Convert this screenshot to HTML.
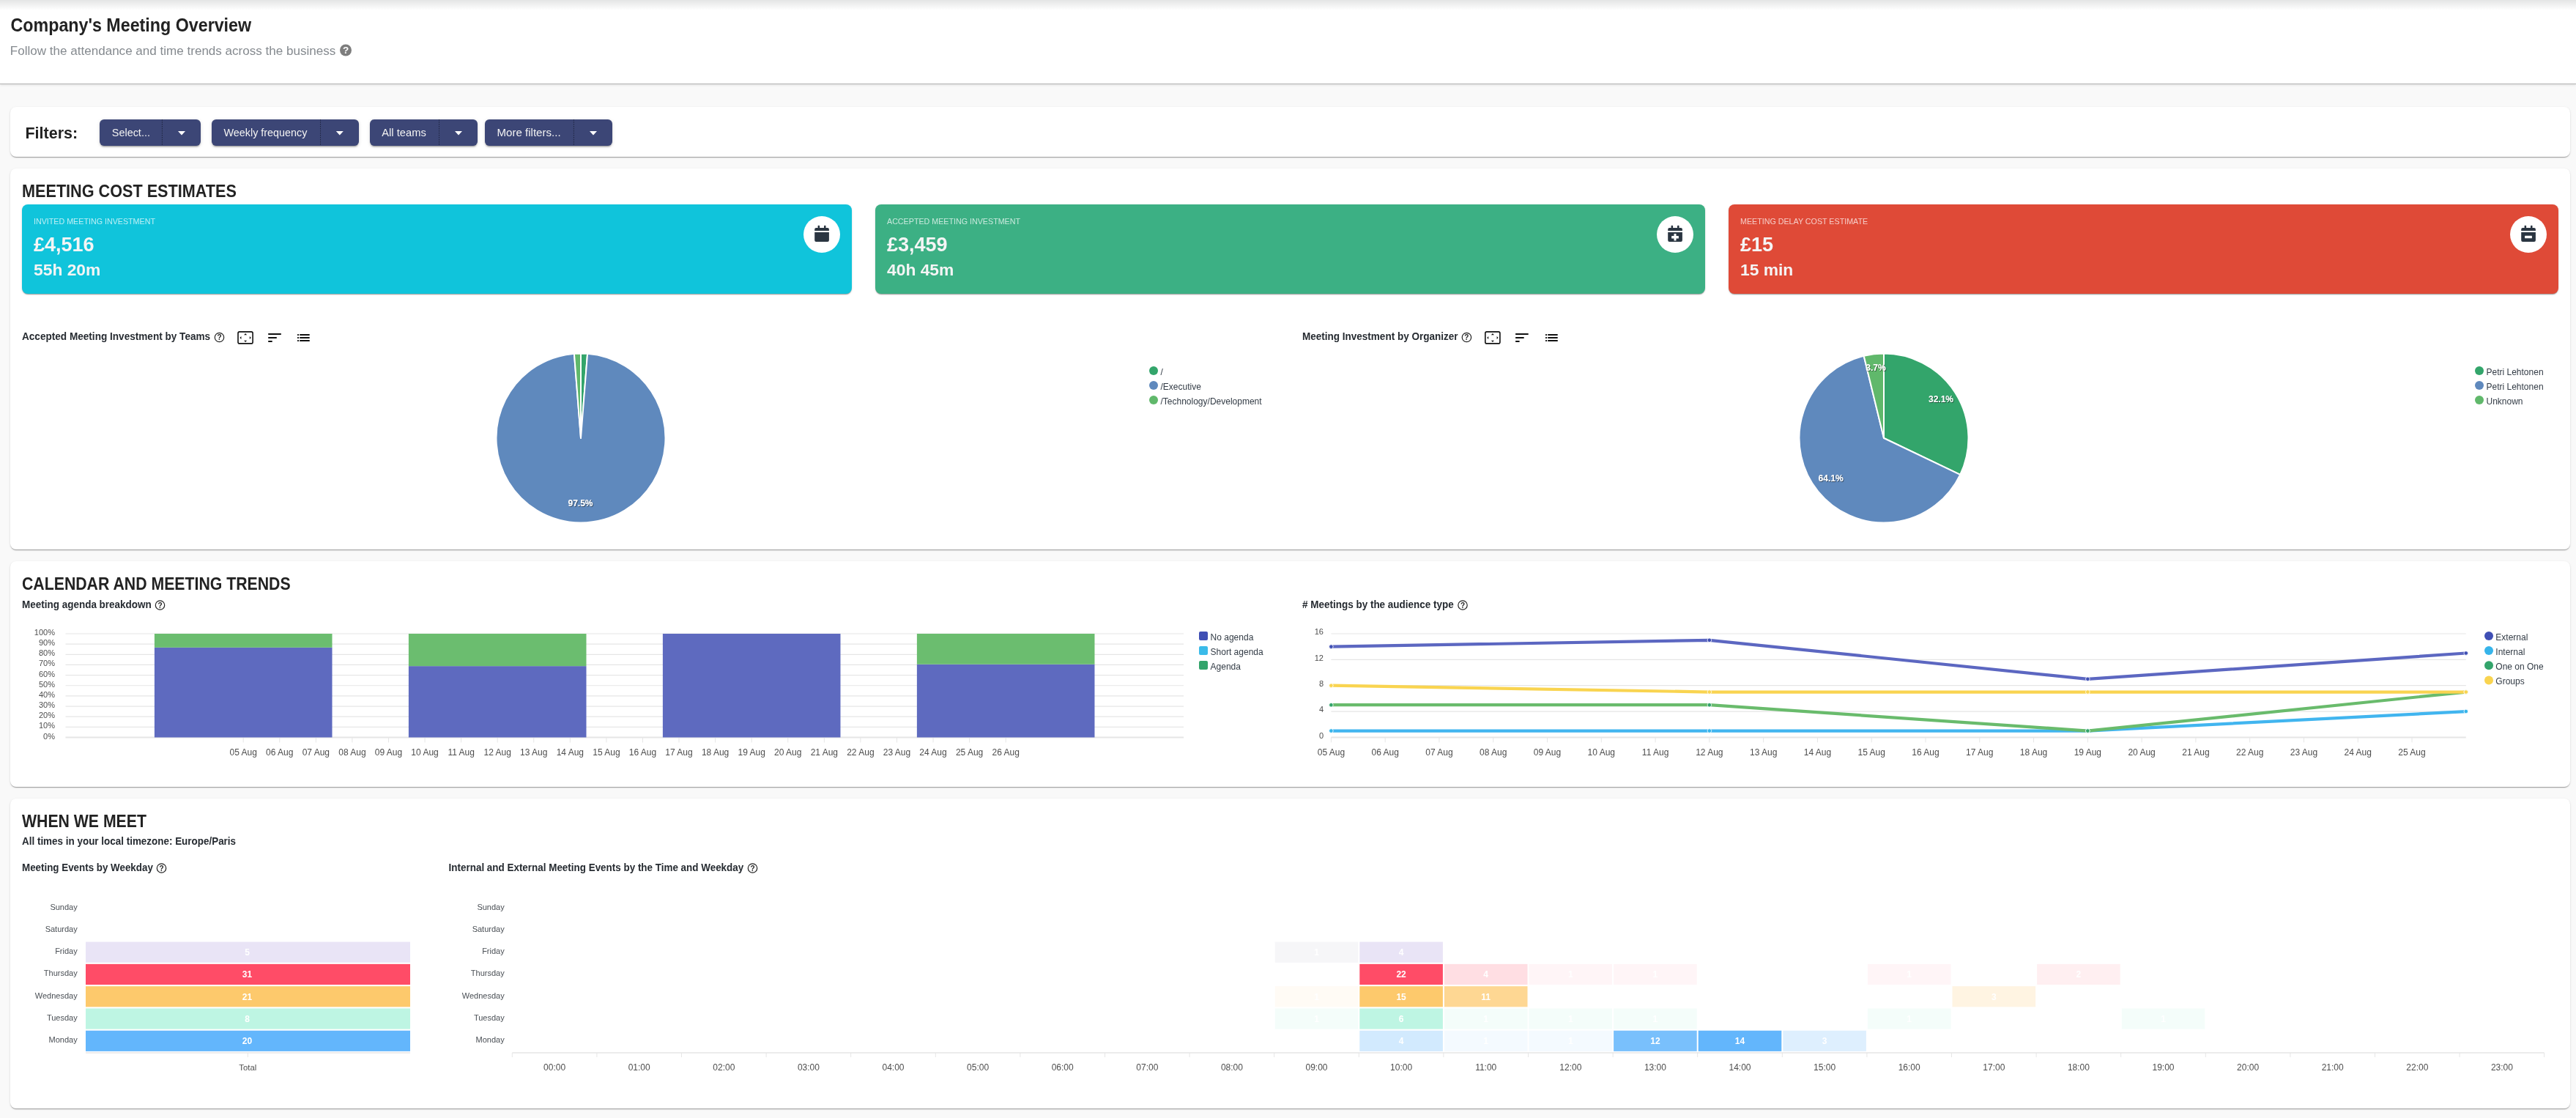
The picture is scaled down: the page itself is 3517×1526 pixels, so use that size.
<!DOCTYPE html>
<html><head><meta charset="utf-8"><style>
html,body{margin:0;padding:0;}
body{width:3517px;height:1526px;position:relative;overflow:hidden;background:#f9f9f9;font-family:"Liberation Sans", sans-serif;}
svg text{font-family:"Liberation Sans", sans-serif;}
</style></head><body>
<div style="position:absolute;left:0;top:0;width:3517px;height:114px;background:linear-gradient(#e4e5e5 0px,#fff 14px);border-bottom:1px solid #b4b4b4;box-shadow:0 1px 3px rgba(0,0,0,.12)"></div><div style="position:absolute;left:14px;top:146px;width:3495px;height:68px;border-radius:8px;background:#fff;box-shadow:0 2px 1px -1px rgba(0,0,0,.2),0 1px 1px 0 rgba(0,0,0,.14),0 1px 3px 0 rgba(0,0,0,.12)"></div><div style="position:absolute;left:136.1px;top:163px;width:137.8px;height:36px;border-radius:6px;background:#3c4676;box-shadow:0 3px 1px -2px rgba(0,0,0,.2),0 2px 2px 0 rgba(0,0,0,.14),0 1px 5px 0 rgba(0,0,0,.12)"></div><div style="position:absolute;left:289.2px;top:163px;width:200.4px;height:36px;border-radius:6px;background:#3c4676;box-shadow:0 3px 1px -2px rgba(0,0,0,.2),0 2px 2px 0 rgba(0,0,0,.14),0 1px 5px 0 rgba(0,0,0,.12)"></div><div style="position:absolute;left:505.4px;top:163px;width:146.5px;height:36px;border-radius:6px;background:#3c4676;box-shadow:0 3px 1px -2px rgba(0,0,0,.2),0 2px 2px 0 rgba(0,0,0,.14),0 1px 5px 0 rgba(0,0,0,.12)"></div><div style="position:absolute;left:662.2px;top:163px;width:173.6px;height:36px;border-radius:6px;background:#3c4676;box-shadow:0 3px 1px -2px rgba(0,0,0,.2),0 2px 2px 0 rgba(0,0,0,.14),0 1px 5px 0 rgba(0,0,0,.12)"></div><div style="position:absolute;left:14px;top:230px;width:3495px;height:520px;border-radius:8px;background:#fff;box-shadow:0 2px 1px -1px rgba(0,0,0,.2),0 1px 1px 0 rgba(0,0,0,.14),0 1px 3px 0 rgba(0,0,0,.12)"></div><div style="position:absolute;left:30px;top:279px;width:1133px;height:122px;border-radius:8px;background:#10c4db;box-shadow:0 2px 1px -1px rgba(0,0,0,.2),0 1px 1px 0 rgba(0,0,0,.14),0 1px 3px 0 rgba(0,0,0,.12)"></div><div style="position:absolute;left:1195px;top:279px;width:1133px;height:122px;border-radius:8px;background:#3cb084;box-shadow:0 2px 1px -1px rgba(0,0,0,.2),0 1px 1px 0 rgba(0,0,0,.14),0 1px 3px 0 rgba(0,0,0,.12)"></div><div style="position:absolute;left:2360px;top:279px;width:1133px;height:122px;border-radius:8px;background:#df4a37;box-shadow:0 2px 1px -1px rgba(0,0,0,.2),0 1px 1px 0 rgba(0,0,0,.14),0 1px 3px 0 rgba(0,0,0,.12)"></div><div style="position:absolute;left:14px;top:766px;width:3495px;height:308px;border-radius:8px;background:#fff;box-shadow:0 2px 1px -1px rgba(0,0,0,.2),0 1px 1px 0 rgba(0,0,0,.14),0 1px 3px 0 rgba(0,0,0,.12)"></div><div style="position:absolute;left:14px;top:1090px;width:3495px;height:423px;border-radius:8px;background:#fff;box-shadow:0 2px 1px -1px rgba(0,0,0,.2),0 1px 1px 0 rgba(0,0,0,.14),0 1px 3px 0 rgba(0,0,0,.12)"></div>
<svg width="3517" height="1526" viewBox="0 0 3517 1526" style="position:absolute;left:0;top:0;will-change:transform">
<defs><filter id="ts" x="-20%" y="-40%" width="140%" height="180%"><feDropShadow dx="0.8" dy="0.8" stdDeviation="0.5" flood-color="#000" flood-opacity="0.6"/></filter></defs>
<text transform="translate(14.50,43.20) scale(0.8950,1)" font-size="26" font-weight="bold" fill="#222" text-anchor="start" >Company's Meeting Overview</text><text transform="translate(13.80,75.00) scale(1.0040,1)" font-size="17" font-weight="normal" fill="#858a8f" text-anchor="start" >Follow the attendance and time trends across the business</text><circle cx="472" cy="68.5" r="8" fill="#7d7d7d"/><text x="472" y="73.1" font-size="13.5" font-weight="bold" fill="#fff" text-anchor="middle">?</text><text transform="translate(34.50,189.00) scale(0.9900,1)" font-size="21.7" font-weight="bold" fill="#222" text-anchor="start" >Filters:</text><text transform="translate(152.80,186.00) scale(1.0084,1)" font-size="14.3" font-weight="normal" fill="#f2f2f2" text-anchor="start" >Select...</text><line x1="221.40" y1="163.00" x2="221.40" y2="199.00" stroke="#1f2540" stroke-width="1" stroke-dasharray="1.5 1.5"/><path d="M243,179 L253,179 L248,184.5 Z" fill="#fff"/><text transform="translate(305.50,186.00) scale(1.0055,1)" font-size="14.3" font-weight="normal" fill="#f2f2f2" text-anchor="start" >Weekly frequency</text><line x1="437.50" y1="163.00" x2="437.50" y2="199.00" stroke="#1f2540" stroke-width="1" stroke-dasharray="1.5 1.5"/><path d="M458.8,179 L468.8,179 L463.8,184.5 Z" fill="#fff"/><text transform="translate(521.30,186.00) scale(1.0280,1)" font-size="14.3" font-weight="normal" fill="#f2f2f2" text-anchor="start" >All teams</text><line x1="599.50" y1="163.00" x2="599.50" y2="199.00" stroke="#1f2540" stroke-width="1" stroke-dasharray="1.5 1.5"/><path d="M621,179 L631,179 L626,184.5 Z" fill="#fff"/><text transform="translate(678.40,186.00) scale(1.0573,1)" font-size="14.3" font-weight="normal" fill="#f2f2f2" text-anchor="start" >More filters...</text><line x1="783.40" y1="163.00" x2="783.40" y2="199.00" stroke="#1f2540" stroke-width="1" stroke-dasharray="1.5 1.5"/><path d="M805,179 L815,179 L810,184.5 Z" fill="#fff"/><text transform="translate(30.00,269.00) scale(0.9212,1)" font-size="23.5" font-weight="bold" fill="#222" text-anchor="start" >MEETING COST ESTIMATES</text><text transform="translate(46.00,306.25) scale(0.9310,1)" font-size="11.5" font-weight="normal" fill="rgba(255,255,255,0.72)" text-anchor="start" >INVITED MEETING INVESTMENT</text><text x="46.00" y="343.00" font-size="27" font-weight="bold" fill="#f5f5f5" text-anchor="start" >£4,516</text><text transform="translate(46.00,376.00) scale(1.0150,1)" font-size="22.5" font-weight="bold" fill="#f5f5f5" text-anchor="start" >55h 20m</text><circle cx="1122" cy="320" r="25" fill="#fff"/><rect x="1116.60" y="307.70" width="2.50" height="4.20" fill="#2a3541" rx="0.8" /><rect x="1125.00" y="307.70" width="2.50" height="4.20" fill="#2a3541" rx="0.8" /><path d="M1112.2,312.9 a2,2 0 0 1 2,-2 h15.7 a2,2 0 0 1 2,2 v2 h-19.7 z" fill="#2a3541"/><path d="M1112.2,317.0 h19.7 v11.1 a2,2 0 0 1 -2,2 h-15.7 a2,2 0 0 1 -2,-2 z" fill="#2a3541"/><text transform="translate(1211.00,306.25) scale(0.9310,1)" font-size="11.5" font-weight="normal" fill="rgba(255,255,255,0.72)" text-anchor="start" >ACCEPTED MEETING INVESTMENT</text><text x="1211.00" y="343.00" font-size="27" font-weight="bold" fill="#f5f5f5" text-anchor="start" >£3,459</text><text transform="translate(1211.00,376.00) scale(1.0150,1)" font-size="22.5" font-weight="bold" fill="#f5f5f5" text-anchor="start" >40h 45m</text><circle cx="2287" cy="320" r="25" fill="#fff"/><rect x="2281.60" y="307.70" width="2.50" height="4.20" fill="#2a3541" rx="0.8" /><rect x="2290.00" y="307.70" width="2.50" height="4.20" fill="#2a3541" rx="0.8" /><path d="M2277.2,312.9 a2,2 0 0 1 2,-2 h15.7 a2,2 0 0 1 2,2 v2 h-19.7 z" fill="#2a3541"/><path d="M2277.2,317.0 h19.7 v11.1 a2,2 0 0 1 -2,2 h-15.7 a2,2 0 0 1 -2,-2 z" fill="#2a3541"/><rect x="2282.10" y="322.00" width="9.80" height="3.40" fill="#fff" rx="0.5" /><rect x="2285.50" y="319.00" width="3.00" height="9.50" fill="#fff" rx="0.5" /><text transform="translate(2376.00,306.25) scale(0.9310,1)" font-size="11.5" font-weight="normal" fill="rgba(255,255,255,0.72)" text-anchor="start" >MEETING DELAY COST ESTIMATE</text><text x="2376.00" y="343.00" font-size="27" font-weight="bold" fill="#f5f5f5" text-anchor="start" >£15</text><text transform="translate(2376.00,376.00) scale(1.0150,1)" font-size="22.5" font-weight="bold" fill="#f5f5f5" text-anchor="start" >15 min</text><circle cx="3452" cy="320" r="25" fill="#fff"/><rect x="3446.60" y="307.70" width="2.50" height="4.20" fill="#2a3541" rx="0.8" /><rect x="3455.00" y="307.70" width="2.50" height="4.20" fill="#2a3541" rx="0.8" /><path d="M3442.2,312.9 a2,2 0 0 1 2,-2 h15.7 a2,2 0 0 1 2,2 v2 h-19.7 z" fill="#2a3541"/><path d="M3442.2,317.0 h19.7 v11.1 a2,2 0 0 1 -2,2 h-15.7 a2,2 0 0 1 -2,-2 z" fill="#2a3541"/><rect x="3447.10" y="321.80" width="9.80" height="3.40" fill="#fff" rx="0.5" /><text transform="translate(30.00,463.60) scale(0.9070,1)" font-size="15" font-weight="bold" fill="#262b31" text-anchor="start" >Accepted Meeting Investment by Teams</text><circle cx="299.5" cy="460.5" r="6.2" fill="none" stroke="#222" stroke-width="1.2"/><text x="299.5" y="464.1" font-size="10" font-weight="bold" fill="#222" text-anchor="middle">?</text><rect x="325.0" y="452.9" width="20.1" height="16" rx="2" fill="none" stroke="#111" stroke-width="1.6"/><path d="M333.09999999999997,457.2 L337.09999999999997,457.2 L335.09999999999997,455 Z M333.09999999999997,464.8 L337.09999999999997,464.8 L335.09999999999997,467 Z M329.4,458.9 L329.4,462.9 L327.4,460.9 Z M340.8,458.9 L340.8,462.9 L342.8,460.9 Z" fill="#111"/><rect x="366.10" y="454.90" width="17.80" height="2.00" fill="#111" rx="0.6" /><rect x="366.10" y="459.90" width="11.80" height="2.00" fill="#111" rx="0.6" /><rect x="366.10" y="464.90" width="5.70" height="2.00" fill="#111" rx="0.6" /><rect x="406.00" y="455.90" width="2.00" height="2.00" fill="#111" rx="0.5" /><rect x="409.10" y="455.90" width="13.70" height="2.00" fill="#111" rx="0.6" /><rect x="406.00" y="459.90" width="2.00" height="2.00" fill="#111" rx="0.5" /><rect x="409.10" y="459.90" width="13.70" height="2.00" fill="#111" rx="0.6" /><rect x="406.00" y="464.00" width="2.00" height="2.00" fill="#111" rx="0.5" /><rect x="409.10" y="464.00" width="13.70" height="2.00" fill="#111" rx="0.6" /><text transform="translate(1778.00,463.60) scale(0.9020,1)" font-size="15" font-weight="bold" fill="#262b31" text-anchor="start" >Meeting Investment by Organizer</text><circle cx="2002.4" cy="460.5" r="6.2" fill="none" stroke="#222" stroke-width="1.2"/><text x="2002.4" y="464.1" font-size="10" font-weight="bold" fill="#222" text-anchor="middle">?</text><rect x="2027.8" y="452.9" width="20.1" height="16" rx="2" fill="none" stroke="#111" stroke-width="1.6"/><path d="M2035.9,457.2 L2039.9,457.2 L2037.9,455 Z M2035.9,464.8 L2039.9,464.8 L2037.9,467 Z M2032.2,458.9 L2032.2,462.9 L2030.2,460.9 Z M2043.6,458.9 L2043.6,462.9 L2045.6,460.9 Z" fill="#111"/><rect x="2069.00" y="454.90" width="17.80" height="2.00" fill="#111" rx="0.6" /><rect x="2069.00" y="459.90" width="11.80" height="2.00" fill="#111" rx="0.6" /><rect x="2069.00" y="464.90" width="5.70" height="2.00" fill="#111" rx="0.6" /><rect x="2110.00" y="455.90" width="2.00" height="2.00" fill="#111" rx="0.5" /><rect x="2113.10" y="455.90" width="13.70" height="2.00" fill="#111" rx="0.6" /><rect x="2110.00" y="459.90" width="2.00" height="2.00" fill="#111" rx="0.5" /><rect x="2113.10" y="459.90" width="13.70" height="2.00" fill="#111" rx="0.6" /><rect x="2110.00" y="464.00" width="2.00" height="2.00" fill="#111" rx="0.5" /><rect x="2113.10" y="464.00" width="13.70" height="2.00" fill="#111" rx="0.6" /><path d="M793,598 L793.00,482.50 A115.5,115.5 0 0 1 802.06,482.86 Z" fill="#33a56b" stroke="#fff" stroke-width="2" stroke-linejoin="round"/><path d="M793,598 L802.06,482.86 A115.5,115.5 0 1 1 783.94,482.86 Z" fill="#5f89bd" stroke="#fff" stroke-width="2" stroke-linejoin="round"/><path d="M793,598 L783.94,482.86 A115.5,115.5 0 0 1 793.00,482.50 Z" fill="#60b86b" stroke="#fff" stroke-width="2" stroke-linejoin="round"/><path d="M2572,598 L2572.00,482.50 A115.5,115.5 0 0 1 2676.20,647.83 Z" fill="#33a56b" stroke="#fff" stroke-width="2" stroke-linejoin="round"/><path d="M2572,598 L2676.20,647.83 A115.5,115.5 0 1 1 2544.68,485.78 Z" fill="#5f89bd" stroke="#fff" stroke-width="2" stroke-linejoin="round"/><path d="M2572,598 L2544.68,485.78 A115.5,115.5 0 0 1 2572.00,482.50 Z" fill="#60b86b" stroke="#fff" stroke-width="2" stroke-linejoin="round"/><text x="792.5" y="691" font-size="12" font-weight="bold" fill="#fff" text-anchor="middle" filter="url(#ts)">97.5%</text><text x="2650" y="549" font-size="12" font-weight="bold" fill="#fff" text-anchor="middle" filter="url(#ts)">32.1%</text><text x="2499.6" y="656.5" font-size="12" font-weight="bold" fill="#fff" text-anchor="middle" filter="url(#ts)">64.1%</text><text x="2561" y="506" font-size="12" font-weight="bold" fill="#fff" text-anchor="middle" filter="url(#ts)">3.7%</text><circle cx="1575" cy="506" r="6" fill="#33a56b"/><text x="1584.50" y="511.50" font-size="12" font-weight="normal" fill="#333c46" text-anchor="start" >/</text><circle cx="1575" cy="526" r="6" fill="#5f89bd"/><text x="1584.50" y="531.50" font-size="12" font-weight="normal" fill="#333c46" text-anchor="start" >/Executive</text><circle cx="1575" cy="546" r="6" fill="#60b86b"/><text x="1584.50" y="551.50" font-size="12" font-weight="normal" fill="#333c46" text-anchor="start" >/Technology/Development</text><circle cx="3385" cy="506" r="6" fill="#33a56b"/><text x="3394.50" y="511.50" font-size="12" font-weight="normal" fill="#333c46" text-anchor="start" >Petri Lehtonen</text><circle cx="3385" cy="526" r="6" fill="#5f89bd"/><text x="3394.50" y="531.50" font-size="12" font-weight="normal" fill="#333c46" text-anchor="start" >Petri Lehtonen</text><circle cx="3385" cy="546" r="6" fill="#60b86b"/><text x="3394.50" y="551.50" font-size="12" font-weight="normal" fill="#333c46" text-anchor="start" >Unknown</text><text transform="translate(30.00,805.00) scale(0.9053,1)" font-size="23.5" font-weight="bold" fill="#222" text-anchor="start" >CALENDAR AND MEETING TRENDS</text><text transform="translate(30.00,830.00) scale(0.9000,1)" font-size="15" font-weight="bold" fill="#262b31" text-anchor="start" >Meeting agenda breakdown</text><circle cx="218.5" cy="826" r="6.2" fill="none" stroke="#222" stroke-width="1.2"/><text x="218.5" y="829.6" font-size="10" font-weight="bold" fill="#222" text-anchor="middle">?</text><text transform="translate(1778.00,830.40) scale(0.9000,1)" font-size="15" font-weight="bold" fill="#262b31" text-anchor="start" ># Meetings by the audience type</text><line x1="89.50" y1="1006.50" x2="1616.00" y2="1006.50" stroke="#e6e6e6" stroke-width="2" /><text x="75.00" y="1008.50" font-size="11" font-weight="normal" fill="#4d4d4d" text-anchor="end" >0%</text><line x1="89.50" y1="992.35" x2="1616.00" y2="992.35" stroke="#e6e6e6" stroke-width="1.2" /><text x="75.00" y="994.35" font-size="11" font-weight="normal" fill="#4d4d4d" text-anchor="end" >10%</text><line x1="89.50" y1="978.20" x2="1616.00" y2="978.20" stroke="#e6e6e6" stroke-width="1.2" /><text x="75.00" y="980.20" font-size="11" font-weight="normal" fill="#4d4d4d" text-anchor="end" >20%</text><line x1="89.50" y1="964.05" x2="1616.00" y2="964.05" stroke="#e6e6e6" stroke-width="1.2" /><text x="75.00" y="966.05" font-size="11" font-weight="normal" fill="#4d4d4d" text-anchor="end" >30%</text><line x1="89.50" y1="949.90" x2="1616.00" y2="949.90" stroke="#e6e6e6" stroke-width="1.2" /><text x="75.00" y="951.90" font-size="11" font-weight="normal" fill="#4d4d4d" text-anchor="end" >40%</text><line x1="89.50" y1="935.75" x2="1616.00" y2="935.75" stroke="#e6e6e6" stroke-width="1.2" /><text x="75.00" y="937.75" font-size="11" font-weight="normal" fill="#4d4d4d" text-anchor="end" >50%</text><line x1="89.50" y1="921.60" x2="1616.00" y2="921.60" stroke="#e6e6e6" stroke-width="1.2" /><text x="75.00" y="923.60" font-size="11" font-weight="normal" fill="#4d4d4d" text-anchor="end" >60%</text><line x1="89.50" y1="907.45" x2="1616.00" y2="907.45" stroke="#e6e6e6" stroke-width="1.2" /><text x="75.00" y="909.45" font-size="11" font-weight="normal" fill="#4d4d4d" text-anchor="end" >70%</text><line x1="89.50" y1="893.30" x2="1616.00" y2="893.30" stroke="#e6e6e6" stroke-width="1.2" /><text x="75.00" y="895.30" font-size="11" font-weight="normal" fill="#4d4d4d" text-anchor="end" >80%</text><line x1="89.50" y1="879.15" x2="1616.00" y2="879.15" stroke="#e6e6e6" stroke-width="1.2" /><text x="75.00" y="881.15" font-size="11" font-weight="normal" fill="#4d4d4d" text-anchor="end" >90%</text><line x1="89.50" y1="865.00" x2="1616.00" y2="865.00" stroke="#e6e6e6" stroke-width="1.2" /><text x="75.00" y="867.00" font-size="11" font-weight="normal" fill="#4d4d4d" text-anchor="end" >100%</text><line x1="332.20" y1="1006.50" x2="332.20" y2="1013.50" stroke="#e6e6e6" stroke-width="1" /><text x="332.20" y="1031.20" font-size="12" font-weight="normal" fill="#4d4d4d" text-anchor="middle" >05 Aug</text><line x1="381.77" y1="1006.50" x2="381.77" y2="1013.50" stroke="#e6e6e6" stroke-width="1" /><text x="381.77" y="1031.20" font-size="12" font-weight="normal" fill="#4d4d4d" text-anchor="middle" >06 Aug</text><line x1="431.34" y1="1006.50" x2="431.34" y2="1013.50" stroke="#e6e6e6" stroke-width="1" /><text x="431.34" y="1031.20" font-size="12" font-weight="normal" fill="#4d4d4d" text-anchor="middle" >07 Aug</text><line x1="480.91" y1="1006.50" x2="480.91" y2="1013.50" stroke="#e6e6e6" stroke-width="1" /><text x="480.91" y="1031.20" font-size="12" font-weight="normal" fill="#4d4d4d" text-anchor="middle" >08 Aug</text><line x1="530.48" y1="1006.50" x2="530.48" y2="1013.50" stroke="#e6e6e6" stroke-width="1" /><text x="530.48" y="1031.20" font-size="12" font-weight="normal" fill="#4d4d4d" text-anchor="middle" >09 Aug</text><line x1="580.05" y1="1006.50" x2="580.05" y2="1013.50" stroke="#e6e6e6" stroke-width="1" /><text x="580.05" y="1031.20" font-size="12" font-weight="normal" fill="#4d4d4d" text-anchor="middle" >10 Aug</text><line x1="629.62" y1="1006.50" x2="629.62" y2="1013.50" stroke="#e6e6e6" stroke-width="1" /><text x="629.62" y="1031.20" font-size="12" font-weight="normal" fill="#4d4d4d" text-anchor="middle" >11 Aug</text><line x1="679.19" y1="1006.50" x2="679.19" y2="1013.50" stroke="#e6e6e6" stroke-width="1" /><text x="679.19" y="1031.20" font-size="12" font-weight="normal" fill="#4d4d4d" text-anchor="middle" >12 Aug</text><line x1="728.76" y1="1006.50" x2="728.76" y2="1013.50" stroke="#e6e6e6" stroke-width="1" /><text x="728.76" y="1031.20" font-size="12" font-weight="normal" fill="#4d4d4d" text-anchor="middle" >13 Aug</text><line x1="778.33" y1="1006.50" x2="778.33" y2="1013.50" stroke="#e6e6e6" stroke-width="1" /><text x="778.33" y="1031.20" font-size="12" font-weight="normal" fill="#4d4d4d" text-anchor="middle" >14 Aug</text><line x1="827.90" y1="1006.50" x2="827.90" y2="1013.50" stroke="#e6e6e6" stroke-width="1" /><text x="827.90" y="1031.20" font-size="12" font-weight="normal" fill="#4d4d4d" text-anchor="middle" >15 Aug</text><line x1="877.47" y1="1006.50" x2="877.47" y2="1013.50" stroke="#e6e6e6" stroke-width="1" /><text x="877.47" y="1031.20" font-size="12" font-weight="normal" fill="#4d4d4d" text-anchor="middle" >16 Aug</text><line x1="927.04" y1="1006.50" x2="927.04" y2="1013.50" stroke="#e6e6e6" stroke-width="1" /><text x="927.04" y="1031.20" font-size="12" font-weight="normal" fill="#4d4d4d" text-anchor="middle" >17 Aug</text><line x1="976.61" y1="1006.50" x2="976.61" y2="1013.50" stroke="#e6e6e6" stroke-width="1" /><text x="976.61" y="1031.20" font-size="12" font-weight="normal" fill="#4d4d4d" text-anchor="middle" >18 Aug</text><line x1="1026.18" y1="1006.50" x2="1026.18" y2="1013.50" stroke="#e6e6e6" stroke-width="1" /><text x="1026.18" y="1031.20" font-size="12" font-weight="normal" fill="#4d4d4d" text-anchor="middle" >19 Aug</text><line x1="1075.75" y1="1006.50" x2="1075.75" y2="1013.50" stroke="#e6e6e6" stroke-width="1" /><text x="1075.75" y="1031.20" font-size="12" font-weight="normal" fill="#4d4d4d" text-anchor="middle" >20 Aug</text><line x1="1125.32" y1="1006.50" x2="1125.32" y2="1013.50" stroke="#e6e6e6" stroke-width="1" /><text x="1125.32" y="1031.20" font-size="12" font-weight="normal" fill="#4d4d4d" text-anchor="middle" >21 Aug</text><line x1="1174.89" y1="1006.50" x2="1174.89" y2="1013.50" stroke="#e6e6e6" stroke-width="1" /><text x="1174.89" y="1031.20" font-size="12" font-weight="normal" fill="#4d4d4d" text-anchor="middle" >22 Aug</text><line x1="1224.46" y1="1006.50" x2="1224.46" y2="1013.50" stroke="#e6e6e6" stroke-width="1" /><text x="1224.46" y="1031.20" font-size="12" font-weight="normal" fill="#4d4d4d" text-anchor="middle" >23 Aug</text><line x1="1274.03" y1="1006.50" x2="1274.03" y2="1013.50" stroke="#e6e6e6" stroke-width="1" /><text x="1274.03" y="1031.20" font-size="12" font-weight="normal" fill="#4d4d4d" text-anchor="middle" >24 Aug</text><line x1="1323.60" y1="1006.50" x2="1323.60" y2="1013.50" stroke="#e6e6e6" stroke-width="1" /><text x="1323.60" y="1031.20" font-size="12" font-weight="normal" fill="#4d4d4d" text-anchor="middle" >25 Aug</text><line x1="1373.17" y1="1006.50" x2="1373.17" y2="1013.50" stroke="#e6e6e6" stroke-width="1" /><text x="1373.17" y="1031.20" font-size="12" font-weight="normal" fill="#4d4d4d" text-anchor="middle" >26 Aug</text><rect x="210.90" y="883.82" width="242.60" height="122.68" fill="#5e6abf" rx="0" /><rect x="210.90" y="865.00" width="242.60" height="18.82" fill="#6bbd6f" rx="0" /><rect x="557.89" y="909.15" width="242.60" height="97.35" fill="#5e6abf" rx="0" /><rect x="557.89" y="865.00" width="242.60" height="44.15" fill="#6bbd6f" rx="0" /><rect x="904.88" y="865.00" width="242.60" height="141.50" fill="#5e6abf" rx="0" /><rect x="1251.87" y="906.74" width="242.60" height="99.76" fill="#5e6abf" rx="0" /><rect x="1251.87" y="865.00" width="242.60" height="41.74" fill="#6bbd6f" rx="0" /><rect x="1637.00" y="862.00" width="12.00" height="12.00" fill="#3f4fb4" rx="2" /><text x="1652.60" y="873.60" font-size="12" font-weight="normal" fill="#333c46" text-anchor="start" >No agenda</text><rect x="1637.00" y="882.00" width="12.00" height="12.00" fill="#3bbbe9" rx="2" /><text x="1652.60" y="893.60" font-size="12" font-weight="normal" fill="#333c46" text-anchor="start" >Short agenda</text><rect x="1637.00" y="902.00" width="12.00" height="12.00" fill="#33a46b" rx="2" /><text x="1652.60" y="913.60" font-size="12" font-weight="normal" fill="#333c46" text-anchor="start" >Agenda</text><circle cx="1997" cy="826" r="6.2" fill="none" stroke="#222" stroke-width="1.2"/><text x="1997" y="829.6" font-size="10" font-weight="bold" fill="#222" text-anchor="middle">?</text><line x1="1817.40" y1="1006.40" x2="3366.80" y2="1006.40" stroke="#e6e6e6" stroke-width="2" /><text x="1807.00" y="1007.60" font-size="11" font-weight="normal" fill="#4d4d4d" text-anchor="end" >0</text><line x1="1817.40" y1="971.05" x2="3366.80" y2="971.05" stroke="#e6e6e6" stroke-width="1.2" /><text x="1807.00" y="972.25" font-size="11" font-weight="normal" fill="#4d4d4d" text-anchor="end" >4</text><line x1="1817.40" y1="935.70" x2="3366.80" y2="935.70" stroke="#e6e6e6" stroke-width="1.2" /><text x="1807.00" y="936.90" font-size="11" font-weight="normal" fill="#4d4d4d" text-anchor="end" >8</text><line x1="1817.40" y1="900.35" x2="3366.80" y2="900.35" stroke="#e6e6e6" stroke-width="1.2" /><text x="1807.00" y="901.55" font-size="11" font-weight="normal" fill="#4d4d4d" text-anchor="end" >12</text><line x1="1817.40" y1="865.00" x2="3366.80" y2="865.00" stroke="#e6e6e6" stroke-width="1.2" /><text x="1807.00" y="866.20" font-size="11" font-weight="normal" fill="#4d4d4d" text-anchor="end" >16</text><line x1="1817.40" y1="1006.40" x2="1817.40" y2="1013.40" stroke="#e6e6e6" stroke-width="1" /><text x="1817.40" y="1031.00" font-size="12" font-weight="normal" fill="#4d4d4d" text-anchor="middle" >05 Aug</text><line x1="1891.18" y1="1006.40" x2="1891.18" y2="1013.40" stroke="#e6e6e6" stroke-width="1" /><text x="1891.18" y="1031.00" font-size="12" font-weight="normal" fill="#4d4d4d" text-anchor="middle" >06 Aug</text><line x1="1964.96" y1="1006.40" x2="1964.96" y2="1013.40" stroke="#e6e6e6" stroke-width="1" /><text x="1964.96" y="1031.00" font-size="12" font-weight="normal" fill="#4d4d4d" text-anchor="middle" >07 Aug</text><line x1="2038.74" y1="1006.40" x2="2038.74" y2="1013.40" stroke="#e6e6e6" stroke-width="1" /><text x="2038.74" y="1031.00" font-size="12" font-weight="normal" fill="#4d4d4d" text-anchor="middle" >08 Aug</text><line x1="2112.52" y1="1006.40" x2="2112.52" y2="1013.40" stroke="#e6e6e6" stroke-width="1" /><text x="2112.52" y="1031.00" font-size="12" font-weight="normal" fill="#4d4d4d" text-anchor="middle" >09 Aug</text><line x1="2186.30" y1="1006.40" x2="2186.30" y2="1013.40" stroke="#e6e6e6" stroke-width="1" /><text x="2186.30" y="1031.00" font-size="12" font-weight="normal" fill="#4d4d4d" text-anchor="middle" >10 Aug</text><line x1="2260.09" y1="1006.40" x2="2260.09" y2="1013.40" stroke="#e6e6e6" stroke-width="1" /><text x="2260.09" y="1031.00" font-size="12" font-weight="normal" fill="#4d4d4d" text-anchor="middle" >11 Aug</text><line x1="2333.87" y1="1006.40" x2="2333.87" y2="1013.40" stroke="#e6e6e6" stroke-width="1" /><text x="2333.87" y="1031.00" font-size="12" font-weight="normal" fill="#4d4d4d" text-anchor="middle" >12 Aug</text><line x1="2407.65" y1="1006.40" x2="2407.65" y2="1013.40" stroke="#e6e6e6" stroke-width="1" /><text x="2407.65" y="1031.00" font-size="12" font-weight="normal" fill="#4d4d4d" text-anchor="middle" >13 Aug</text><line x1="2481.43" y1="1006.40" x2="2481.43" y2="1013.40" stroke="#e6e6e6" stroke-width="1" /><text x="2481.43" y="1031.00" font-size="12" font-weight="normal" fill="#4d4d4d" text-anchor="middle" >14 Aug</text><line x1="2555.21" y1="1006.40" x2="2555.21" y2="1013.40" stroke="#e6e6e6" stroke-width="1" /><text x="2555.21" y="1031.00" font-size="12" font-weight="normal" fill="#4d4d4d" text-anchor="middle" >15 Aug</text><line x1="2628.99" y1="1006.40" x2="2628.99" y2="1013.40" stroke="#e6e6e6" stroke-width="1" /><text x="2628.99" y="1031.00" font-size="12" font-weight="normal" fill="#4d4d4d" text-anchor="middle" >16 Aug</text><line x1="2702.77" y1="1006.40" x2="2702.77" y2="1013.40" stroke="#e6e6e6" stroke-width="1" /><text x="2702.77" y="1031.00" font-size="12" font-weight="normal" fill="#4d4d4d" text-anchor="middle" >17 Aug</text><line x1="2776.55" y1="1006.40" x2="2776.55" y2="1013.40" stroke="#e6e6e6" stroke-width="1" /><text x="2776.55" y="1031.00" font-size="12" font-weight="normal" fill="#4d4d4d" text-anchor="middle" >18 Aug</text><line x1="2850.33" y1="1006.40" x2="2850.33" y2="1013.40" stroke="#e6e6e6" stroke-width="1" /><text x="2850.33" y="1031.00" font-size="12" font-weight="normal" fill="#4d4d4d" text-anchor="middle" >19 Aug</text><line x1="2924.11" y1="1006.40" x2="2924.11" y2="1013.40" stroke="#e6e6e6" stroke-width="1" /><text x="2924.11" y="1031.00" font-size="12" font-weight="normal" fill="#4d4d4d" text-anchor="middle" >20 Aug</text><line x1="2997.90" y1="1006.40" x2="2997.90" y2="1013.40" stroke="#e6e6e6" stroke-width="1" /><text x="2997.90" y="1031.00" font-size="12" font-weight="normal" fill="#4d4d4d" text-anchor="middle" >21 Aug</text><line x1="3071.68" y1="1006.40" x2="3071.68" y2="1013.40" stroke="#e6e6e6" stroke-width="1" /><text x="3071.68" y="1031.00" font-size="12" font-weight="normal" fill="#4d4d4d" text-anchor="middle" >22 Aug</text><line x1="3145.46" y1="1006.40" x2="3145.46" y2="1013.40" stroke="#e6e6e6" stroke-width="1" /><text x="3145.46" y="1031.00" font-size="12" font-weight="normal" fill="#4d4d4d" text-anchor="middle" >23 Aug</text><line x1="3219.24" y1="1006.40" x2="3219.24" y2="1013.40" stroke="#e6e6e6" stroke-width="1" /><text x="3219.24" y="1031.00" font-size="12" font-weight="normal" fill="#4d4d4d" text-anchor="middle" >24 Aug</text><line x1="3293.02" y1="1006.40" x2="3293.02" y2="1013.40" stroke="#e6e6e6" stroke-width="1" /><text x="3293.02" y="1031.00" font-size="12" font-weight="normal" fill="#4d4d4d" text-anchor="middle" >25 Aug</text><polyline points="1817.40,882.67 2333.87,873.84 2850.33,926.86 3366.80,891.51" fill="none" stroke="#5c67c1" stroke-width="4.2" stroke-linejoin="round"/><polyline points="1817.40,997.56 2333.87,997.56 2850.33,997.56 3366.80,971.05" fill="none" stroke="#41b5ef" stroke-width="4.2" stroke-linejoin="round"/><polyline points="1817.40,962.21 2333.87,962.21 2850.33,997.56 3366.80,944.54" fill="none" stroke="#69bb6c" stroke-width="4.2" stroke-linejoin="round"/><polyline points="1817.40,935.70 2333.87,944.54 2850.33,944.54 3366.80,944.54" fill="none" stroke="#f9d450" stroke-width="4.2" stroke-linejoin="round"/><circle cx="1817.40" cy="882.67" r="2.8" fill="#3f4fb4" stroke="#fff" stroke-width="0.8"/><circle cx="2333.87" cy="873.84" r="2.8" fill="#3f4fb4" stroke="#fff" stroke-width="0.8"/><circle cx="2850.33" cy="926.86" r="2.8" fill="#3f4fb4" stroke="#fff" stroke-width="0.8"/><circle cx="3366.80" cy="891.51" r="2.8" fill="#3f4fb4" stroke="#fff" stroke-width="0.8"/><circle cx="1817.40" cy="997.56" r="2.8" fill="#36b4ea" stroke="#fff" stroke-width="0.8"/><circle cx="2333.87" cy="997.56" r="2.8" fill="#36b4ea" stroke="#fff" stroke-width="0.8"/><circle cx="2850.33" cy="997.56" r="2.8" fill="#36b4ea" stroke="#fff" stroke-width="0.8"/><circle cx="3366.80" cy="971.05" r="2.8" fill="#36b4ea" stroke="#fff" stroke-width="0.8"/><circle cx="1817.40" cy="962.21" r="2.8" fill="#33a46b" stroke="#fff" stroke-width="0.8"/><circle cx="2333.87" cy="962.21" r="2.8" fill="#33a46b" stroke="#fff" stroke-width="0.8"/><circle cx="2850.33" cy="997.56" r="2.8" fill="#33a46b" stroke="#fff" stroke-width="0.8"/><circle cx="3366.80" cy="944.54" r="2.8" fill="#33a46b" stroke="#fff" stroke-width="0.8"/><circle cx="1817.40" cy="935.70" r="2.8" fill="#f9d450" stroke="#fff" stroke-width="0.8"/><circle cx="2333.87" cy="944.54" r="2.8" fill="#f9d450" stroke="#fff" stroke-width="0.8"/><circle cx="2850.33" cy="944.54" r="2.8" fill="#f9d450" stroke="#fff" stroke-width="0.8"/><circle cx="3366.80" cy="944.54" r="2.8" fill="#f9d450" stroke="#fff" stroke-width="0.8"/><circle cx="3398" cy="868" r="6" fill="#3f4fb4"/><text x="3407.30" y="873.50" font-size="12" font-weight="normal" fill="#333c46" text-anchor="start" >External</text><circle cx="3398" cy="888" r="6" fill="#36b4ea"/><text x="3407.30" y="893.50" font-size="12" font-weight="normal" fill="#333c46" text-anchor="start" >Internal</text><circle cx="3398" cy="908.2" r="6" fill="#33a46b"/><text x="3407.30" y="913.70" font-size="12" font-weight="normal" fill="#333c46" text-anchor="start" >One on One</text><circle cx="3398" cy="928.4" r="6" fill="#f9d450"/><text x="3407.30" y="933.90" font-size="12" font-weight="normal" fill="#333c46" text-anchor="start" >Groups</text><text transform="translate(30.00,1128.75) scale(0.9043,1)" font-size="23.5" font-weight="bold" fill="#222" text-anchor="start" >WHEN WE MEET</text><text transform="translate(30.00,1153.25) scale(0.8970,1)" font-size="15" font-weight="bold" fill="#262b31" text-anchor="start" >All times in your local timezone: Europe/Paris</text><text transform="translate(30.00,1188.80) scale(0.8920,1)" font-size="15" font-weight="bold" fill="#262b31" text-anchor="start" >Meeting Events by Weekday</text><circle cx="220.5" cy="1185" r="6.2" fill="none" stroke="#222" stroke-width="1.2"/><text x="220.5" y="1188.6" font-size="10" font-weight="bold" fill="#222" text-anchor="middle">?</text><text transform="translate(612.60,1188.60) scale(0.8960,1)" font-size="15" font-weight="bold" fill="#262b31" text-anchor="start" >Internal and External Meeting Events by the Time and Weekday</text><circle cx="1027.5" cy="1185" r="6.2" fill="none" stroke="#222" stroke-width="1.2"/><text x="1027.5" y="1188.6" font-size="10" font-weight="bold" fill="#222" text-anchor="middle">?</text><text x="105.70" y="1241.64" font-size="11" font-weight="normal" fill="#4a4f55" text-anchor="end" >Sunday</text><text x="688.70" y="1241.64" font-size="11" font-weight="normal" fill="#4a4f55" text-anchor="end" >Sunday</text><text x="105.70" y="1271.92" font-size="11" font-weight="normal" fill="#4a4f55" text-anchor="end" >Saturday</text><text x="688.70" y="1271.92" font-size="11" font-weight="normal" fill="#4a4f55" text-anchor="end" >Saturday</text><text x="105.70" y="1302.20" font-size="11" font-weight="normal" fill="#4a4f55" text-anchor="end" >Friday</text><text x="688.70" y="1302.20" font-size="11" font-weight="normal" fill="#4a4f55" text-anchor="end" >Friday</text><rect x="117.00" y="1285.60" width="443.00" height="28.20" fill="rgb(233,228,246)" rx="0" /><text x="337.50" y="1304.00" font-size="12" font-weight="bold" fill="#fff" text-anchor="middle" >5</text><text x="105.70" y="1332.48" font-size="11" font-weight="normal" fill="#4a4f55" text-anchor="end" >Thursday</text><text x="688.70" y="1332.48" font-size="11" font-weight="normal" fill="#4a4f55" text-anchor="end" >Thursday</text><rect x="117.00" y="1315.88" width="443.00" height="28.20" fill="rgb(255,76,103)" rx="0" /><text x="337.50" y="1334.28" font-size="12" font-weight="bold" fill="#fff" text-anchor="middle" >31</text><text x="105.70" y="1362.76" font-size="11" font-weight="normal" fill="#4a4f55" text-anchor="end" >Wednesday</text><text x="688.70" y="1362.76" font-size="11" font-weight="normal" fill="#4a4f55" text-anchor="end" >Wednesday</text><rect x="117.00" y="1346.16" width="443.00" height="28.20" fill="rgb(253,201,108)" rx="0" /><text x="337.50" y="1364.56" font-size="12" font-weight="bold" fill="#fff" text-anchor="middle" >21</text><text x="105.70" y="1393.04" font-size="11" font-weight="normal" fill="#4a4f55" text-anchor="end" >Tuesday</text><text x="688.70" y="1393.04" font-size="11" font-weight="normal" fill="#4a4f55" text-anchor="end" >Tuesday</text><rect x="117.00" y="1376.44" width="443.00" height="28.20" fill="rgb(190,245,227)" rx="0" /><text x="337.50" y="1394.84" font-size="12" font-weight="bold" fill="#fff" text-anchor="middle" >8</text><text x="105.70" y="1423.32" font-size="11" font-weight="normal" fill="#4a4f55" text-anchor="end" >Monday</text><text x="688.70" y="1423.32" font-size="11" font-weight="normal" fill="#4a4f55" text-anchor="end" >Monday</text><rect x="117.00" y="1406.72" width="443.00" height="28.20" fill="rgb(99,182,252)" rx="0" /><text x="337.50" y="1425.12" font-size="12" font-weight="bold" fill="#fff" text-anchor="middle" >20</text><line x1="117.00" y1="1437.00" x2="560.00" y2="1437.00" stroke="#e6e6e6" stroke-width="1.5" /><line x1="338.30" y1="1437.00" x2="338.30" y2="1443.00" stroke="#e6e6e6" stroke-width="1" /><text x="338.30" y="1461.00" font-size="11.3" font-weight="normal" fill="#4d4d4d" text-anchor="middle" >Total</text><rect x="1740.70" y="1285.60" width="113.60" height="28.20" fill="rgb(246,246,248)" rx="0" /><text x="1797.50" y="1304.00" font-size="12" font-weight="bold" fill="#fff" text-anchor="middle" >1</text><rect x="1856.30" y="1285.60" width="113.60" height="28.20" fill="rgb(233,228,246)" rx="0" /><text x="1913.10" y="1304.00" font-size="12" font-weight="bold" fill="#fff" text-anchor="middle" >4</text><rect x="1856.30" y="1315.88" width="113.60" height="28.20" fill="rgb(255,76,103)" rx="0" /><text x="1913.10" y="1334.28" font-size="12" font-weight="bold" fill="#fff" text-anchor="middle" >22</text><rect x="1971.90" y="1315.88" width="113.60" height="28.20" fill="rgb(255,222,227)" rx="0" /><text x="2028.70" y="1334.28" font-size="12" font-weight="bold" fill="#fff" text-anchor="middle" >4</text><rect x="2087.50" y="1315.88" width="113.60" height="28.20" fill="rgb(255,245,247)" rx="0" /><text x="2144.30" y="1334.28" font-size="12" font-weight="bold" fill="#fff" text-anchor="middle" >1</text><rect x="2203.10" y="1315.88" width="113.60" height="28.20" fill="rgb(255,245,247)" rx="0" /><text x="2259.90" y="1334.28" font-size="12" font-weight="bold" fill="#fff" text-anchor="middle" >1</text><rect x="2549.90" y="1315.88" width="113.60" height="28.20" fill="rgb(255,245,247)" rx="0" /><text x="2606.70" y="1334.28" font-size="12" font-weight="bold" fill="#fff" text-anchor="middle" >1</text><rect x="2781.10" y="1315.88" width="113.60" height="28.20" fill="rgb(255,239,241)" rx="0" /><text x="2837.90" y="1334.28" font-size="12" font-weight="bold" fill="#fff" text-anchor="middle" >2</text><rect x="1740.70" y="1346.16" width="113.60" height="28.20" fill="rgb(255,251,245)" rx="0" /><text x="1797.50" y="1364.56" font-size="12" font-weight="bold" fill="#fff" text-anchor="middle" >1</text><rect x="1856.30" y="1346.16" width="113.60" height="28.20" fill="rgb(253,201,108)" rx="0" /><text x="1913.10" y="1364.56" font-size="12" font-weight="bold" fill="#fff" text-anchor="middle" >15</text><rect x="1971.90" y="1346.16" width="113.60" height="28.20" fill="rgb(254,215,147)" rx="0" /><text x="2028.70" y="1364.56" font-size="12" font-weight="bold" fill="#fff" text-anchor="middle" >11</text><rect x="2665.50" y="1346.16" width="113.60" height="28.20" fill="rgb(255,244,226)" rx="0" /><text x="2722.30" y="1364.56" font-size="12" font-weight="bold" fill="#fff" text-anchor="middle" >3</text><rect x="1740.70" y="1376.44" width="113.60" height="28.20" fill="rgb(244,253,250)" rx="0" /><text x="1797.50" y="1394.84" font-size="12" font-weight="bold" fill="#fff" text-anchor="middle" >1</text><rect x="1856.30" y="1376.44" width="113.60" height="28.20" fill="rgb(190,245,227)" rx="0" /><text x="1913.10" y="1394.84" font-size="12" font-weight="bold" fill="#fff" text-anchor="middle" >6</text><rect x="1971.90" y="1376.44" width="113.60" height="28.20" fill="rgb(244,253,250)" rx="0" /><text x="2028.70" y="1394.84" font-size="12" font-weight="bold" fill="#fff" text-anchor="middle" >1</text><rect x="2087.50" y="1376.44" width="113.60" height="28.20" fill="rgb(244,253,250)" rx="0" /><text x="2144.30" y="1394.84" font-size="12" font-weight="bold" fill="#fff" text-anchor="middle" >1</text><rect x="2203.10" y="1376.44" width="113.60" height="28.20" fill="rgb(244,253,250)" rx="0" /><text x="2259.90" y="1394.84" font-size="12" font-weight="bold" fill="#fff" text-anchor="middle" >1</text><rect x="2549.90" y="1376.44" width="113.60" height="28.20" fill="rgb(244,253,250)" rx="0" /><text x="2606.70" y="1394.84" font-size="12" font-weight="bold" fill="#fff" text-anchor="middle" >1</text><rect x="2896.70" y="1376.44" width="113.60" height="28.20" fill="rgb(244,253,250)" rx="0" /><text x="2953.50" y="1394.84" font-size="12" font-weight="bold" fill="#fff" text-anchor="middle" >1</text><rect x="1856.30" y="1406.72" width="113.60" height="28.20" fill="rgb(210,234,254)" rx="0" /><text x="1913.10" y="1425.12" font-size="12" font-weight="bold" fill="#fff" text-anchor="middle" >4</text><rect x="1971.90" y="1406.72" width="113.60" height="28.20" fill="rgb(244,250,255)" rx="0" /><text x="2028.70" y="1425.12" font-size="12" font-weight="bold" fill="#fff" text-anchor="middle" >1</text><rect x="2087.50" y="1406.72" width="113.60" height="28.20" fill="rgb(244,250,255)" rx="0" /><text x="2144.30" y="1425.12" font-size="12" font-weight="bold" fill="#fff" text-anchor="middle" >1</text><rect x="2203.10" y="1406.72" width="113.60" height="28.20" fill="rgb(121,192,252)" rx="0" /><text x="2259.90" y="1425.12" font-size="12" font-weight="bold" fill="#fff" text-anchor="middle" >12</text><rect x="2318.70" y="1406.72" width="113.60" height="28.20" fill="rgb(99,182,252)" rx="0" /><text x="2375.50" y="1425.12" font-size="12" font-weight="bold" fill="#fff" text-anchor="middle" >14</text><rect x="2434.30" y="1406.72" width="113.60" height="28.20" fill="rgb(222,239,254)" rx="0" /><text x="2491.10" y="1425.12" font-size="12" font-weight="bold" fill="#fff" text-anchor="middle" >3</text><line x1="699.30" y1="1437.00" x2="3473.70" y2="1437.00" stroke="#e6e6e6" stroke-width="1.5" /><line x1="699.30" y1="1437.00" x2="699.30" y2="1443.00" stroke="#e6e6e6" stroke-width="1" /><line x1="814.90" y1="1437.00" x2="814.90" y2="1443.00" stroke="#e6e6e6" stroke-width="1" /><line x1="930.50" y1="1437.00" x2="930.50" y2="1443.00" stroke="#e6e6e6" stroke-width="1" /><line x1="1046.10" y1="1437.00" x2="1046.10" y2="1443.00" stroke="#e6e6e6" stroke-width="1" /><line x1="1161.70" y1="1437.00" x2="1161.70" y2="1443.00" stroke="#e6e6e6" stroke-width="1" /><line x1="1277.30" y1="1437.00" x2="1277.30" y2="1443.00" stroke="#e6e6e6" stroke-width="1" /><line x1="1392.90" y1="1437.00" x2="1392.90" y2="1443.00" stroke="#e6e6e6" stroke-width="1" /><line x1="1508.50" y1="1437.00" x2="1508.50" y2="1443.00" stroke="#e6e6e6" stroke-width="1" /><line x1="1624.10" y1="1437.00" x2="1624.10" y2="1443.00" stroke="#e6e6e6" stroke-width="1" /><line x1="1739.70" y1="1437.00" x2="1739.70" y2="1443.00" stroke="#e6e6e6" stroke-width="1" /><line x1="1855.30" y1="1437.00" x2="1855.30" y2="1443.00" stroke="#e6e6e6" stroke-width="1" /><line x1="1970.90" y1="1437.00" x2="1970.90" y2="1443.00" stroke="#e6e6e6" stroke-width="1" /><line x1="2086.50" y1="1437.00" x2="2086.50" y2="1443.00" stroke="#e6e6e6" stroke-width="1" /><line x1="2202.10" y1="1437.00" x2="2202.10" y2="1443.00" stroke="#e6e6e6" stroke-width="1" /><line x1="2317.70" y1="1437.00" x2="2317.70" y2="1443.00" stroke="#e6e6e6" stroke-width="1" /><line x1="2433.30" y1="1437.00" x2="2433.30" y2="1443.00" stroke="#e6e6e6" stroke-width="1" /><line x1="2548.90" y1="1437.00" x2="2548.90" y2="1443.00" stroke="#e6e6e6" stroke-width="1" /><line x1="2664.50" y1="1437.00" x2="2664.50" y2="1443.00" stroke="#e6e6e6" stroke-width="1" /><line x1="2780.10" y1="1437.00" x2="2780.10" y2="1443.00" stroke="#e6e6e6" stroke-width="1" /><line x1="2895.70" y1="1437.00" x2="2895.70" y2="1443.00" stroke="#e6e6e6" stroke-width="1" /><line x1="3011.30" y1="1437.00" x2="3011.30" y2="1443.00" stroke="#e6e6e6" stroke-width="1" /><line x1="3126.90" y1="1437.00" x2="3126.90" y2="1443.00" stroke="#e6e6e6" stroke-width="1" /><line x1="3242.50" y1="1437.00" x2="3242.50" y2="1443.00" stroke="#e6e6e6" stroke-width="1" /><line x1="3358.10" y1="1437.00" x2="3358.10" y2="1443.00" stroke="#e6e6e6" stroke-width="1" /><line x1="3473.70" y1="1437.00" x2="3473.70" y2="1443.00" stroke="#e6e6e6" stroke-width="1" /><text x="757.10" y="1460.50" font-size="12" font-weight="normal" fill="#4d4d4d" text-anchor="middle" >00:00</text><text x="872.70" y="1460.50" font-size="12" font-weight="normal" fill="#4d4d4d" text-anchor="middle" >01:00</text><text x="988.30" y="1460.50" font-size="12" font-weight="normal" fill="#4d4d4d" text-anchor="middle" >02:00</text><text x="1103.90" y="1460.50" font-size="12" font-weight="normal" fill="#4d4d4d" text-anchor="middle" >03:00</text><text x="1219.50" y="1460.50" font-size="12" font-weight="normal" fill="#4d4d4d" text-anchor="middle" >04:00</text><text x="1335.10" y="1460.50" font-size="12" font-weight="normal" fill="#4d4d4d" text-anchor="middle" >05:00</text><text x="1450.70" y="1460.50" font-size="12" font-weight="normal" fill="#4d4d4d" text-anchor="middle" >06:00</text><text x="1566.30" y="1460.50" font-size="12" font-weight="normal" fill="#4d4d4d" text-anchor="middle" >07:00</text><text x="1681.90" y="1460.50" font-size="12" font-weight="normal" fill="#4d4d4d" text-anchor="middle" >08:00</text><text x="1797.50" y="1460.50" font-size="12" font-weight="normal" fill="#4d4d4d" text-anchor="middle" >09:00</text><text x="1913.10" y="1460.50" font-size="12" font-weight="normal" fill="#4d4d4d" text-anchor="middle" >10:00</text><text x="2028.70" y="1460.50" font-size="12" font-weight="normal" fill="#4d4d4d" text-anchor="middle" >11:00</text><text x="2144.30" y="1460.50" font-size="12" font-weight="normal" fill="#4d4d4d" text-anchor="middle" >12:00</text><text x="2259.90" y="1460.50" font-size="12" font-weight="normal" fill="#4d4d4d" text-anchor="middle" >13:00</text><text x="2375.50" y="1460.50" font-size="12" font-weight="normal" fill="#4d4d4d" text-anchor="middle" >14:00</text><text x="2491.10" y="1460.50" font-size="12" font-weight="normal" fill="#4d4d4d" text-anchor="middle" >15:00</text><text x="2606.70" y="1460.50" font-size="12" font-weight="normal" fill="#4d4d4d" text-anchor="middle" >16:00</text><text x="2722.30" y="1460.50" font-size="12" font-weight="normal" fill="#4d4d4d" text-anchor="middle" >17:00</text><text x="2837.90" y="1460.50" font-size="12" font-weight="normal" fill="#4d4d4d" text-anchor="middle" >18:00</text><text x="2953.50" y="1460.50" font-size="12" font-weight="normal" fill="#4d4d4d" text-anchor="middle" >19:00</text><text x="3069.10" y="1460.50" font-size="12" font-weight="normal" fill="#4d4d4d" text-anchor="middle" >20:00</text><text x="3184.70" y="1460.50" font-size="12" font-weight="normal" fill="#4d4d4d" text-anchor="middle" >21:00</text><text x="3300.30" y="1460.50" font-size="12" font-weight="normal" fill="#4d4d4d" text-anchor="middle" >22:00</text><text x="3415.90" y="1460.50" font-size="12" font-weight="normal" fill="#4d4d4d" text-anchor="middle" >23:00</text>
</svg>
</body></html>
